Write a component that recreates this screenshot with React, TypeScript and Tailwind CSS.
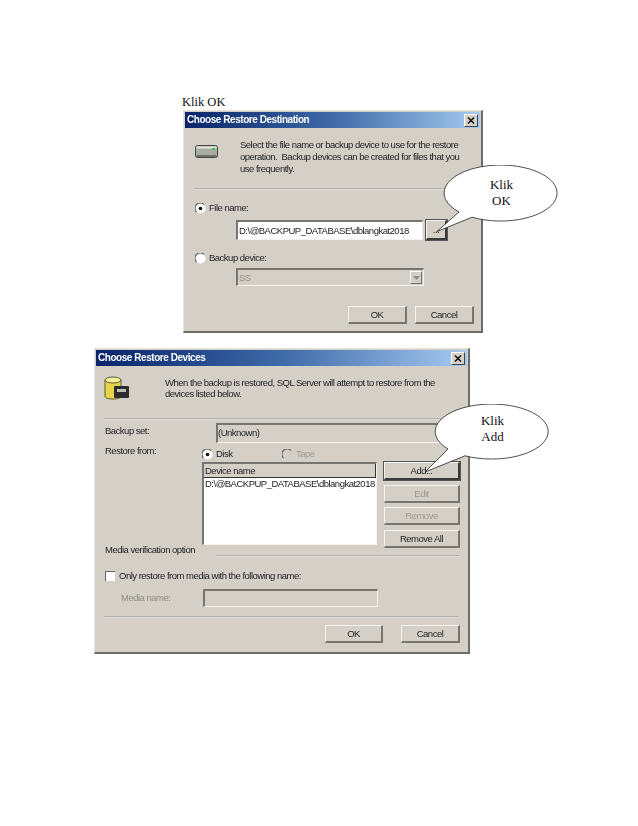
import React from "react";

const Btn = ({ label, w, dis, def, cls = "" }: { label: string; w: string; dis?: boolean; def?: boolean; cls?: string }) => (
  <div className={`${w} h-[18px] flex items-center justify-center bg-[#d4d0c8] border-t border-l border-t-[#f4f3ef] border-l-[#f4f3ef] border-r-2 border-b-2 ${def ? "border-r-[#3a3a3a] border-b-[#3a3a3a] outline outline-1 outline-[#555]" : "border-r-[#77756f] border-b-[#77756f]"} ${dis ? "text-[#9c9a94]" : "text-[#222]"} ${cls}`}>
    {label}
  </div>
);

const Radio = ({ on, dis }: { on?: boolean; dis?: boolean }) => (
  <svg width="11" height="11" viewBox="0 0 11 11" className="shrink-0">
    <circle cx="5.5" cy="5.5" r="5" fill={dis ? "#d4d0c8" : "#fff"} stroke="none" />
    <path d="M1.5 9A5 5 0 0 1 9 1.5" fill="none" stroke="#666" strokeWidth="1.2" />
    {on && <circle cx="5.5" cy="5.5" r="1.8" fill="#111" />}
  </svg>
);

const Sunken = ({ cls = "", children }: { cls?: string; children?: React.ReactNode }) => (
  <div className={`border-t-2 border-l-2 border-t-[#77756f] border-l-[#77756f] border-b border-r border-b-[#f4f3ef] border-r-[#f4f3ef] ${cls}`}>{children}</div>
);

const Sep = ({ cls = "" }: { cls?: string }) => <div className={`h-[2px] bg-gradient-to-b from-[#a09e98] to-[#f1f0ec] ${cls}`} />;

const Title = ({ text }: { text: string }) => (
  <div className="h-[16px] flex items-center justify-between pl-[2px] pr-[2px] bg-gradient-to-r from-[#0a246a] via-[#3f6aa8] to-[#a6caf0]">
    <span className="font-bold text-white text-[10px] tracking-[-0.45px]">{text}</span>
    <div className="w-[14px] h-[13px] bg-[#d4d0c8] border-r border-b border-r-[#444] border-b-[#444] border-t border-l border-t-white border-l-white flex items-center justify-center">
      <svg width="8" height="7" viewBox="0 0 8 7"><path d="M1 0.5L7 6.5M7 0.5L1 6.5" stroke="#111" strokeWidth="1.5" /></svg>
    </div>
  </div>
);

const Callout = ({ cls, tail, a, b, h }: { cls: string; tail: string; a: string; b: string; h: string }) => (
  <div className={`absolute w-[126px] h-[72px] ${cls}`}>
    <svg width="126" height="72" viewBox="0 0 126 72" className="absolute inset-0">
      <path d={tail} fill="#fff" stroke="#222" strokeWidth="0.8" />
    </svg>
    <div className={`absolute left-[12px] top-0 w-[113px] ${h} flex flex-col items-center justify-center font-['Liberation_Serif',serif] text-[13px] leading-[16px] text-[#111] pl-[2px]`}>
      <span>{a}</span>
      <span>{b}</span>
    </div>
  </div>
);

export default function App() {
  const dialogCls = "relative bg-[#d4d0c8] border-t border-l border-t-[#e6e4de] border-l-[#e6e4de] border-r-2 border-b-2 border-r-[#6e6d68] border-b-[#6e6d68] p-[1px] font-['Liberation_Sans',sans-serif] text-[9.5px] tracking-[-0.5px] leading-[12px] text-[#222]";
  return (
    <div className="relative w-[638px] h-[826px] bg-white overflow-hidden">
      <div className="pt-[95px] pl-[182px] font-['Liberation_Serif',serif] text-[12.5px] leading-[15px] text-[#111]">Klik OK</div>

      <div className={`${dialogCls} ml-[183px] mt-0 w-[300px] h-[223px] blur-[0.35px]`}>
        <Title text="Choose Restore Destination" />
        <div className="flex pt-[11px] pl-[10px]">
          <svg width="23" height="13" viewBox="0 0 23 13" className="mt-[6px] shrink-0">
            <rect x="0.5" y="0.5" width="22" height="12" rx="2" fill="#a9aca2" stroke="#444" />
            <rect x="1.5" y="1.5" width="20" height="2" fill="#e4e6de" />
            <rect x="1.5" y="10" width="20" height="2" fill="#6f716a" />
            <rect x="17" y="3" width="3" height="2" fill="#33c24a" />
          </svg>
          <div className="ml-[22px] whitespace-nowrap">
            <div>Select the file name or backup device to use for the restore</div>
            <div>operation.&nbsp; Backup devices can be created for files that you</div>
            <div>use frequently.</div>
          </div>
        </div>
        <Sep cls="mt-[13px] ml-[9px] mr-[10px]" />
        <div className="mt-[12px] ml-[10px] flex items-center gap-[3px] h-[12px]"><Radio on /><span>File name:</span></div>
        <div className="mt-[6px] ml-[51px] flex items-start gap-[3px]">
          <Sunken cls="w-[187px] h-[20px] bg-white flex items-center pl-[1px] whitespace-nowrap text-[#222]">D:\@BACKPUP_DATABASE\dblangkat2018</Sunken>
          <Btn label="..." w="w-[21px]" def cls="!h-[20px]" />
        </div>
        <div className="mt-[12px] ml-[10px] flex items-center gap-[3px] h-[12px]"><Radio /><span>Backup device:</span></div>
        <Sunken cls="mt-[4px] ml-[51px] w-[188px] h-[18px] flex items-center justify-between pl-[1px] pr-[1px] text-[#8f8d87]">
          <span>SS</span>
          <div className="w-[12px] h-[13px] border border-t-white border-l-white border-r-[#77756f] border-b-[#77756f] flex items-center justify-center">
            <svg width="7" height="4" viewBox="0 0 7 4"><path d="M0 0H7L3.5 4Z" fill="#8f8d87" /></svg>
          </div>
        </Sunken>
        <div className="mt-[20px] ml-[163px] flex gap-[8px]">
          <Btn label="OK" w="w-[59px]" />
          <Btn label="Cancel" w="w-[59px]" />
        </div>
      </div>

      <div className={`${dialogCls} ml-[94px] mt-[15px] w-[376px] h-[306px] blur-[0.35px]`}>
        <Title text="Choose Restore Devices" />
        <div className="flex pt-[10px] pl-[8px]">
          <svg width="26" height="24" viewBox="0 0 26 24" className="shrink-0">
            <path d="M1 4V20C1 22 4 23 9 23S17 22 17 20V4Z" fill="#e8d44a" stroke="#5d5a30" />
            <ellipse cx="9" cy="4" rx="8" ry="3" fill="#f6ef9a" stroke="#5d5a30" />
            <rect x="10" y="10" width="15" height="12" rx="1" fill="#2c2c2c" />
            <rect x="13" y="13" width="9" height="3" fill="#bdbdb4" />
          </svg>
          <div className="ml-[35px] pt-[1px] whitespace-nowrap leading-[11px]">
            <div>When the backup is restored, SQL Server will attempt to restore from the</div>
            <div>devices listed below.</div>
          </div>
        </div>
        <Sep cls="mt-[18px] mx-[8px]" />
        <div className="mt-[3px] ml-[9px] mr-[8px] flex items-start h-[20px]">
          <span className="w-[111px] pt-[2px]">Backup set:</span>
          <Sunken cls="flex-1 h-[20px] flex items-center pb-[2px]">(Unknown)</Sunken>
        </div>
        <div className="mt-[3px] ml-[9px] flex">
          <div className="w-[97px]"><div className="mt-[-1px]">Restore from:</div></div>
          <div>
            <div className="h-[16px] flex items-center">
              <Radio on /><span className="ml-[3px] w-[66px]">Disk</span>
              <Radio dis /><span className="ml-[3px] text-[#9c9a94]">Tape</span>
            </div>
            <div className="flex gap-[7px]">
              <Sunken cls="w-[175px] h-[83px] bg-white">
                <div className="h-[14px] bg-[#d4d0c8] border-b border-r border-b-[#333] border-r-[#333] flex items-center pl-[1px]">Device name</div>
                <div className="pl-[1px] whitespace-nowrap">D:\@BACKPUP_DATABASE\dblangkat2018</div>
              </Sunken>
              <div className="flex flex-col">
                <Btn label="Add..." w="w-[76px]" def />
                <Btn label="Edit" w="w-[76px]" dis cls="mt-[5px]" />
                <Btn label="Remove" w="w-[76px]" dis cls="mt-[4px]" />
                <Btn label="Remove All" w="w-[76px]" cls="mt-[5px]" />
              </div>
            </div>
          </div>
        </div>
        <div className="mt-[-4px] ml-[9px] mr-[8px] flex items-start h-[12px]">
          <span className="w-[111px] whitespace-nowrap">Media verification option</span>
          <Sep cls="flex-1 mt-[11px]" />
        </div>
        <div className="mt-[14px] ml-[9px] flex items-center h-[12px]">
          <div className="w-[10px] h-[10px] bg-white border-t border-l border-t-[#666] border-l-[#666]" />
          <span className="ml-[4px]">Only restore from media with the following name:</span>
        </div>
        <div className="mt-[7px] ml-[25px] flex items-center">
          <span className="w-[82px] text-[#8f8d87]">Media name:</span>
          <Sunken cls="w-[175px] h-[18px]" />
        </div>
        <Sep cls="mt-[9px] mx-[8px]" />
        <div className="mt-[7px] ml-[229px] flex gap-[18px]">
          <Btn label="OK" w="w-[58px]" />
          <Btn label="Cancel" w="w-[59px]" />
        </div>
      </div>

      <Callout cls="left-[432px] top-[165px]" h="h-[56px]" tail="M27 47L4.7 66.7L40 52.2A56.5 28 0 1 0 27 47Z" a="Klik" b="OK" />
      <Callout cls="left-[423px] top-[404px]" h="h-[50px]" tail="M25 45L2 68L42 51.8A56.5 27.5 0 1 0 25 45Z" a="Klik" b="Add" />
    </div>
  );
}
